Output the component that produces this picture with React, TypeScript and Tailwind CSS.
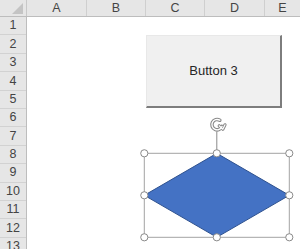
const cols = [
  { label: "A", w: "w-[60px]" },
  { label: "B", w: "w-[59px]" },
  { label: "C", w: "w-[59px]" },
  { label: "D", w: "w-[60px]" },
];

const rows = Array.from({ length: 13 }, (_, i) => i + 1);

function Handle({ x, y }: { x: number; y: number }) {
  return <circle cx={x} cy={y} r={3.6} fill="#ffffff" stroke="#8a8a8a" strokeWidth={1} />;
}

export default function App() {
  const l = 144.3;
  const r = 289.3;
  const t = 153.3;
  const b = 237.3;
  const cx = (l + r) / 2;
  const cy = (t + b) / 2;
  // rotation handle arc
  const arc = `M ${cx + 3} ${120.2} A 5.2 5.2 0 1 0 ${cx + 5.2} ${126.4}`;
  const head = `M ${cx + 2.4} ${125.8} L ${cx + 6} ${129.2} L ${cx + 8.2} ${124.8}`;

  return (
    <div
      className="relative h-[249px] w-[300px] overflow-hidden bg-white text-[12.5px] text-[#444]"
      style={{ fontFamily: '"Liberation Sans", Arial, sans-serif' }}
    >
      {/* column headers */}
      <div className="flex h-[17px] border-b border-[#bdbdbd] bg-[#e6e6e6]">
        <div className="relative w-[27px] shrink-0 border-r border-[#c8c8c8]">
          <div className="absolute bottom-[2px] right-[3px] h-0 w-0 border-b-[11px] border-l-[11px] border-b-[#c4c4c4] border-l-transparent" />
        </div>
        {cols.map((c) => (
          <div
            key={c.label}
            className={`${c.w} shrink-0 border-r border-[#cfcfcf] text-center leading-[16px]`}
          >
            {c.label}
          </div>
        ))}
        <div className="flex-1 text-center leading-[16px]">E</div>
      </div>

      {/* row headers, sheet has no gridlines */}
      <div className="flex">
        <div className="w-[27px] shrink-0 border-r border-[#bdbdbd] bg-[#e6e6e6]">
          {rows.map((n) => (
            <div
              key={n}
              className="flex h-[18.4px] items-center justify-center border-b border-[#d2d2d2]"
            >
              {n}
            </div>
          ))}
        </div>
        <div className="flex-1 bg-white" />
      </div>

      {/* form button */}
      <div className="absolute left-[146px] top-[35px] flex h-[73px] w-[136px] items-center justify-center border-l border-t border-r-2 border-b-2 border-l-[#e8e8e8] border-t-[#e8e8e8] border-r-[#7d7d7d] border-b-[#7d7d7d] bg-[#f0f0f0] text-[13px] text-[#262626]">
        Button 3
      </div>

      {/* selected diamond shape */}
      <svg className="absolute left-0 top-0" width={300} height={249} viewBox="0 0 300 249">
        <polygon
          points={`${cx},${t} ${r},${cy} ${cx},${b} ${l},${cy}`}
          fill="#4472c4"
          stroke="#2f528f"
          strokeWidth={1}
        />
        <rect x={l} y={t} width={r - l} height={b - t} fill="none" stroke="#a3a3a3" strokeWidth={1} />
        <line x1={cx} y1={131.5} x2={cx} y2={t} stroke="#8a8a8a" strokeWidth={1} />
        <g fill="none" strokeLinecap="round" strokeLinejoin="round">
          <path d={arc} stroke="#8a8a8a" strokeWidth={3.6} />
          <path d={head} stroke="#8a8a8a" strokeWidth={3.2} />
          <path d={arc} stroke="#ffffff" strokeWidth={1.4} />
          <path d={head} stroke="#ffffff" strokeWidth={1.2} />
        </g>
        <Handle x={l} y={t} />
        <Handle x={cx} y={t} />
        <Handle x={r} y={t} />
        <Handle x={l} y={cy} />
        <Handle x={r} y={cy} />
        <Handle x={l} y={b} />
        <Handle x={cx} y={b} />
        <Handle x={r} y={b} />
      </svg>
    </div>
  );
}
